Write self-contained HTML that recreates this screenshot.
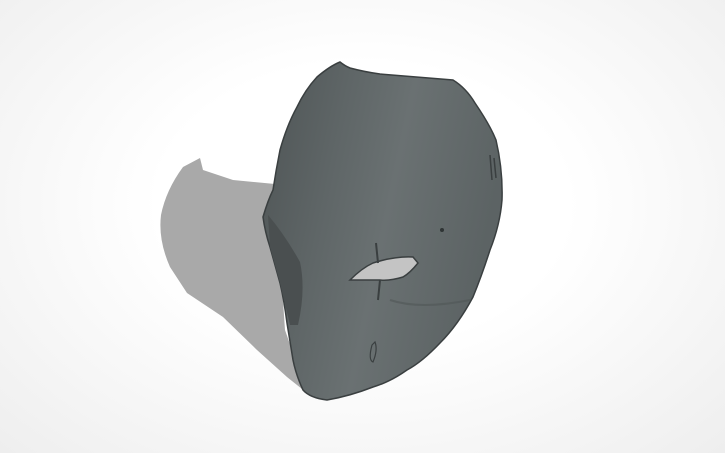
<!DOCTYPE html>
<html><head><style>
html,body{margin:0;padding:0;width:725px;height:453px;overflow:hidden;background:radial-gradient(ellipse at 50% 45%,#ffffff 40%,#eeeeee 100%);}
</style></head><body>
<svg width="725" height="453" viewBox="0 0 725 453" xmlns="http://www.w3.org/2000/svg">
<defs>
<linearGradient id="m" x1="0" y1="0" x2="1" y2="0.3">
<stop offset="0" stop-color="#4e5455"/>
<stop offset="0.35" stop-color="#5f6667"/>
<stop offset="0.6" stop-color="#6a7172"/>
<stop offset="1" stop-color="#5c6364"/>
</linearGradient>
</defs>
<path d="M200,158 L203,170 L233,180 L275,184 L285,330 L307,393 L287,377 L257,350 L223,317 L187,293 L170,267 Q158,240 161,215 Q166,190 183,167 Z" fill="#a9a9a9" stroke-linejoin="round"/>
<path d="M340,62 Q345,66 350,68 Q365,72 380,74 L453,80 Q466,88 475,103 Q490,125 496,140 Q503,170 502,200 Q500,225 490,250 Q482,275 473,297 Q458,325 440,343 Q422,362 407,370 Q390,382 373,387 Q350,396 327,400 Q310,398 303,390 Q296,375 293,360 L287,323 Q284,300 280,283 Q275,265 270,247 Q265,232 263,217 Q268,200 273,190 Q276,170 280,150 Q287,125 297,107 Q305,90 317,77 Q330,66 340,62 Z" fill="url(#m)" stroke="#3a3f40" stroke-width="1.5"/>
<path d="M268,215 Q285,235 300,262 Q306,290 298,325 L290,325 Q284,300 280,283 L270,247 Z" fill="#4a4f50"/>
<path d="M350,280 Q362,268 373,263 Q395,256 413,257 L418,263 Q410,273 403,277 Q390,281 380,280 Z" fill="#c4c4c4" stroke="#3a3f40" stroke-width="1.5"/>
<path d="M376,243 L378,263 M380,280 L378,300" stroke="#3a3f40" stroke-width="2" fill="none"/>
<path d="M490,155 L492,180 M494,158 L496,178" stroke="#3a3f40" stroke-width="1.5"/>
<circle cx="442" cy="230" r="2" fill="#2f3435"/>
<path d="M372,345 Q368,360 373,362 Q378,350 375,342 Z" fill="none" stroke="#3a3f40" stroke-width="1.2"/>
<path d="M390,300 Q420,310 470,300" stroke="#505657" stroke-width="2" fill="none" opacity="0.6"/>
</svg>
</body></html>
